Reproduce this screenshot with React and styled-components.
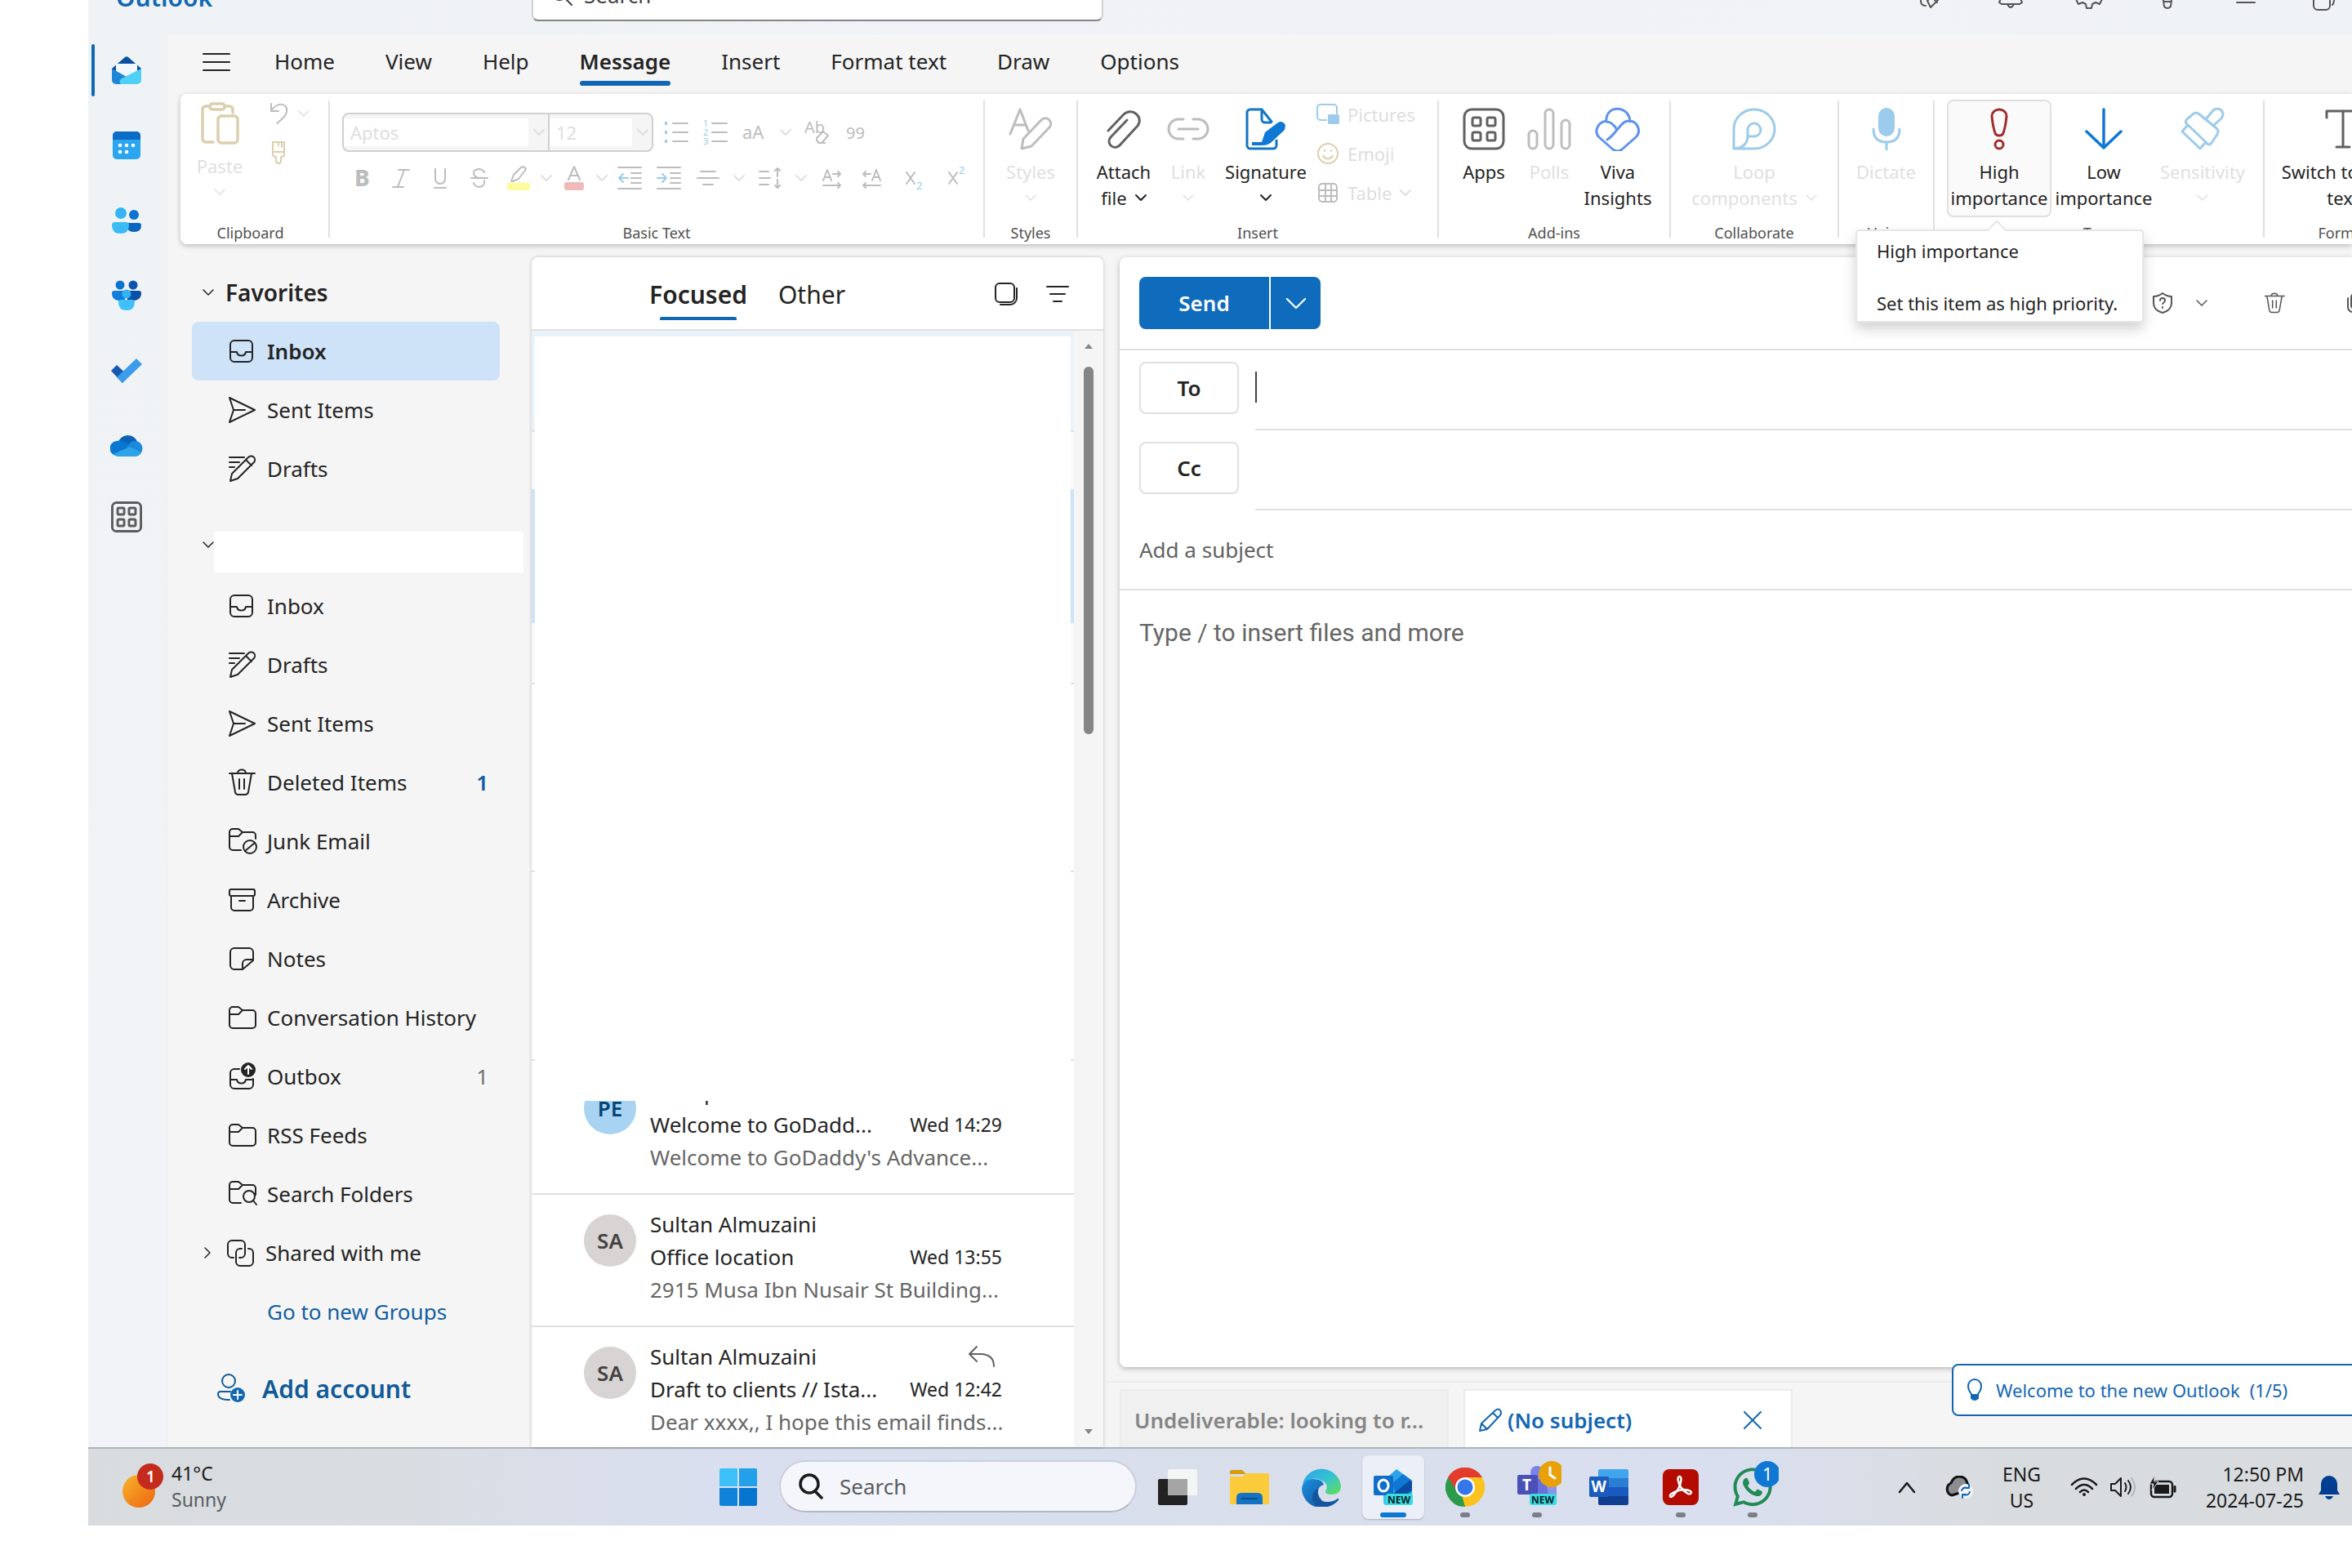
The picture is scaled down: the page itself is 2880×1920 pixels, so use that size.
import React from "react";
import styled, { createGlobalStyle } from "styled-components";
import { FaWhatsapp } from "react-icons/fa";

const GlobalStyle = createGlobalStyle`
  *, *::before, *::after { box-sizing: border-box; }
  body { margin: 0; background: #fff; overflow: hidden; }
  body, button, input, select, textarea { font-family: "Noto Sans", "Open Sans", sans-serif; }
  button { border: 0; padding: 0; background: none; color: inherit; font-size: inherit; }
  svg { display: block; flex: none; }
`;

/* ---------- icon helpers ---------- */

const Svg = ({ w, h, box, children, ...rest }) => (
  <svg width={w} height={h} viewBox={box || `0 0 ${w} ${h}`} fill="none" stroke="currentColor"
    strokeWidth="2" strokeLinecap="round" strokeLinejoin="round" aria-hidden="true" {...rest}>
    {children}
  </svg>
);

const Chevron = ({ w = 14, h = 10, ...rest }) => (
  <Svg w={w} h={h} box="0 0 14 10" {...rest}><path d="M1 2l6 6 6-6" /></Svg>
);

const Letter = ({ x, y, size, children, ...rest }) => (
  <text x={x} y={y} fontSize={size} fontFamily="Noto Sans, sans-serif" fill="currentColor" stroke="none" {...rest}>{children}</text>
);

/* ---------- page frame ---------- */

const Page = styled.div`
  height: 100vh;
  padding: 0 0 52px 108px;
`;

const Screen = styled.div`
  position: relative;
  display: flex;
  flex-direction: column;
  height: 100%;
  overflow: hidden;
  background: #f1f3f7;
  color: #242424;
`;

const TitleBar = styled.header`
  display: flex;
  flex: none;
  align-items: flex-end;
  height: 43px;
  overflow: hidden;
  background: linear-gradient(90deg, #f0f3f5, #f0f2f8 60%, #f0f3f5);
`;

const Brand = styled.span`
  width: 543px;
  padding-left: 34px;
  font-size: 30px;
  font-weight: 600;
  line-height: 40px;
  color: #1267b4;
  margin-bottom: 26px;
`;

const TitleSearch = styled.label`
  display: flex;
  flex: none;
  align-items: center;
  gap: 14px;
  width: 700px;
  height: 64px;
  margin-bottom: 17px;
  padding-left: 22px;
  background: #fff;
  border: 2px solid #d1d1d1;
  border-bottom-color: #858585;
  border-radius: 8px;
  color: #424242;
`;

const PlainInput = styled.input`
  flex: 1;
  min-width: 0;
  border: 0;
  outline: 0;
  padding: 0;
  background: transparent;
  font-size: 26px;
  color: #242424;
  &::placeholder { color: ${(p) => p.$hint || "#616161"}; opacity: 1; }
`;

const TitleActions = styled.div`
  display: flex;
  margin-left: auto;
  margin-right: -14px;
`;

const TitleButton = styled.button`
  display: flex;
  flex: none;
  align-items: center;
  justify-content: center;
  width: 96px;
  height: 96px;
  color: #555;
`;

const Shell = styled.div`
  display: flex;
  flex: 1;
  min-height: 0;
`;

/* ---------- app rail ---------- */

const Rail = styled.nav`
  display: flex;
  flex: none;
  flex-direction: column;
  align-items: center;
  width: 96px;
  margin-top: -3px;
  background: linear-gradient(#f0f3f5, #f1f3f8);
`;

const RailButton = styled.button`
  display: flex;
  flex: none;
  align-items: center;
  justify-content: center;
  width: 100%;
  height: ${(p) => (p.$compact ? 82 : 92)}px;
  padding-right: 2px;
  color: #5c5c5c;
  &::before {
    content: "";
    width: 4px;
    height: 64px;
    margin-right: 20px;
    margin-left: -24px;
    border-radius: 2px;
    background: ${(p) => (p.$active ? "#1267b4" : "transparent")};
  }
`;

const Main = styled.main`
  display: flex;
  flex: 1;
  flex-direction: column;
  min-width: 0;
  background: #f5f5f5;
  border-left: 1px solid #eeeff1;
`;

/* ---------- ribbon ---------- */

const MenuRow = styled.nav`
  display: flex;
  flex: none;
  align-items: flex-start;
  height: 72px;
  padding: 8px 0 0 42px;
`;

const MenuToggle = styled.button`
  display: flex;
  align-items: center;
  justify-content: center;
  width: 36px;
  height: 50px;
  margin-right: 22px;
`;

const MenuTab = styled.button`
  display: flex;
  flex-direction: column;
  flex: none;
  align-items: center;
  padding: 6px 31px 0;
  font-size: 26px;
  line-height: 36px;
  font-weight: ${(p) => (p.$active ? 600 : 400)};
  &::after {
    content: "";
    width: 100%;
    height: 6px;
    margin-top: 6px;
    border-radius: 3px;
    background: ${(p) => (p.$active ? "#1267b4" : "transparent")};
  }
`;

const Ribbon = styled.section`
  position: relative;
  z-index: 2;
  display: flex;
  flex: none;
  height: 184px;
  margin-left: 16px;
  background: #fff;
  border-radius: 8px 0 0 8px;
  box-shadow: 0 2px 6px rgba(0, 0, 0, 0.24);
`;

const Group = styled.div`
  display: flex;
  flex: none;
  flex-direction: column;
  width: ${(p) => p.$w}px;
`;

const GroupBody = styled.div`
  display: flex;
  flex: 1;
  align-items: flex-start;
  justify-content: ${(p) => (p.$center ? "center" : "flex-start")};
  padding: ${(p) => (p.$flush ? 0 : 7)}px 0 0 ${(p) => p.$left || 0}px;
`;

const GroupLabel = styled.div`
  padding: 0 ${(p) => p.$end || 0}px 2px 0;
  font-size: 18px;
  line-height: 24px;
  text-align: center;
  color: #505050;
`;

const Divider = styled.div`
  flex: none;
  width: 2px;
  margin: 8px 0;
  background: #e0e0e0;
`;

const BigButton = styled.button`
  position: relative;
  display: flex;
  flex: none;
  flex-direction: column;
  align-items: center;
  gap: 10px;
  width: ${(p) => p.$w}px;
  height: 144px;
  padding-top: 10px;
  border-radius: 8px;
  font-size: 22px;
  line-height: 32px;
  color: ${(p) => (p.$off ? "#e0e0e0" : "#242424")};
  background: ${(p) => (p.$hover ? "#fafafa" : "transparent")};
  box-shadow: ${(p) => (p.$hover ? "inset 0 0 0 2px #e0e0e0" : "none")};
`;

const BigIcon = styled.span`
  display: flex;
  align-items: center;
  justify-content: center;
  height: 52px;
  color: ${(p) => p.$c || "#616161"};
`;

const BigLabel = styled.span`
  display: flex;
  flex-direction: column;
  align-items: center;
  white-space: nowrap;
`;

const LabelLine = styled.span`
  display: flex;
  align-items: center;
  gap: 10px;
  min-height: 32px;
`;

const SideStack = styled.div`
  display: flex;
  flex-direction: column;
  margin-top: ${(p) => (p.$raised ? -6 : 0)}px;
  padding-left: ${(p) => p.$left}px;
`;

const SideButton = styled.button`
  display: flex;
  align-items: center;
  height: 48px;
  gap: 10px;
  font-size: 22px;
  line-height: 32px;
  color: #dedede;
`;

const SideIcon = styled.span`
  display: flex;
  justify-content: center;
  width: 28px;
  color: ${(p) => p.$c};
`;

const TextTools = styled.div`
  display: flex;
  flex: 1;
  flex-direction: column;
  gap: 8px;
  padding: 23px 0 0 15px;
`;

const ToolRow = styled.div`
  display: flex;
  align-items: center;
  height: 48px;
`;

const ToolButton = styled.button`
  display: flex;
  flex: none;
  align-items: center;
  justify-content: center;
  width: ${(p) => p.$w || 48}px;
  height: 40px;
  color: #bdbdbd;
`;

const Caret = styled(ToolButton)`
  color: #e0e0e0;
`;

const FontBox = styled.div`
  display: flex;
  height: 48px;
  margin-right: 4px;
  border: 2px solid #d1d1d1;
  border-radius: 8px;
  background: #f5f5f5;
  overflow: hidden;
`;

const FontField = styled.label`
  display: flex;
  align-items: center;
  width: ${(p) => p.$w}px;
  padding-right: 4px;
  color: #dedede;
  & + & { border-left: 2px solid #d1d1d1; }
`;

const FontSelect = styled.select`
  flex: 1;
  min-width: 0;
  height: 34px;
  margin-right: 6px;
  padding: 0 0 0 8px;
  border: 0;
  appearance: none;
  background: #fff;
  font-size: 22px;
  line-height: 34px;
  color: #dedede;
  opacity: 1;
`;

const Tooltip = styled.span`
  position: absolute;
  z-index: 5;
  top: 159px;
  left: -112px;
  width: 353px;
  padding: 8px 24px 6px;
  background: #fff;
  border: 2px solid #e6e6e6;
  border-radius: 4px;
  box-shadow: 0 8px 16px rgba(0, 0, 0, 0.18);
  font-size: 22px;
  line-height: 32px;
  text-align: left;
  white-space: nowrap;
  color: #242424;
  &::before {
    content: "";
    position: absolute;
    top: -10px;
    left: 162px;
    width: 18px;
    height: 18px;
    transform: rotate(45deg);
    background: #fff;
    border: solid #e6e6e6;
    border-width: 2px 0 0 2px;
  }
`;

const TipText = styled.span`
  display: block;
  & + & { margin-top: 32px; }
`;

/* ---------- folder pane ---------- */

const Workspace = styled.div`
  position: relative;
  display: flex;
  flex: 1;
  min-height: 0;
`;

const FolderPane = styled.aside`
  flex: none;
  width: 446px;
  padding: 23px 39px 0 30px;
  overflow: hidden;
`;

const SectionHead = styled.button`
  display: flex;
  align-items: center;
  gap: 14px;
  width: 100%;
  height: 72px;
  padding-left: 13px;
  font-size: 28px;
  font-weight: 600;
`;

const AccountHead = styled.div`
  display: flex;
  align-items: center;
  height: 96px;
  padding: 18px 0 0 13px;
  margin-right: -29px;
`;

const Redaction = styled.div`
  flex: 1;
  height: 50px;
  margin-top: 18px;
  background: #fff;
`;

const FolderRow = styled.button`
  display: flex;
  align-items: center;
  width: 100%;
  height: 72px;
  padding: 0 14px 0 ${(p) => (p.$nested ? 14 : 44)}px;
  border-radius: 8px;
  font-size: 26px;
  font-weight: ${(p) => (p.$active ? 600 : 400)};
  background: ${(p) => (p.$active ? "#cfe3f8" : "transparent")};
`;

const FolderIcon = styled.span`
  display: flex;
  width: 36px;
  margin-right: 12px;
`;

const NestedCaret = styled.span`
  display: flex;
  width: 28px;
`;

const Count = styled.span`
  margin-left: auto;
  font-weight: ${(p) => (p.$strong ? 600 : 400)};
  color: ${(p) => (p.$strong ? "#115ea3" : "#707070")};
`;

const GroupsLink = styled.a`
  display: flex;
  align-items: center;
  height: 72px;
  padding-left: 92px;
  font-size: 26px;
  color: #115ea3;
  text-decoration: none;
`;

const AddAccount = styled.button`
  display: flex;
  align-items: center;
  gap: 20px;
  height: 80px;
  margin-top: 18px;
  padding-left: 30px;
  font-size: 30px;
  font-weight: 600;
  color: #115a97;
`;

/* ---------- message list ---------- */

const ListPane = styled.section`
  display: flex;
  flex: none;
  flex-direction: column;
  width: 700px;
  margin-top: 16px;
  background: #fff;
  border-radius: 8px 8px 0 0;
  box-shadow: 0 0 4px rgba(0, 0, 0, 0.22);
  overflow: hidden;
`;

const ListHead = styled.div`
  display: flex;
  flex: none;
  align-items: flex-start;
  height: 90px;
  padding: 26px 42px 0 144px;
  border-bottom: 2px solid #e0e0e0;
`;

const PivotTab = styled.button`
  display: flex;
  flex-direction: column;
  align-items: center;
  margin-right: 32px;
  font-size: 30px;
  line-height: 40px;
  font-weight: ${(p) => (p.$active ? 600 : 400)};
  &::after {
    content: "";
    width: 94px;
    height: 4px;
    margin-top: 7px;
    border-radius: 2px 2px 0 0;
    background: ${(p) => (p.$active ? "#1267b4" : "transparent")};
  }
`;

const ListActions = styled.div`
  display: flex;
  gap: 34px;
  margin: 4px 0 0 auto;
`;

const ListBody = styled.div`
  display: flex;
  flex: 1;
  min-height: 0;
`;

const Rows = styled.div`
  flex: 1;
  min-width: 0;
  overflow: hidden;
`;

const HiddenRow = styled.div`
  height: ${(p) => p.$h}px;
  padding: ${(p) => p.$top || 0}px 4px 0;
  background: ${(p) => p.$bg || "#fff"};
  &::before { content: ""; display: block; height: 100%; background: #fff; }
`;

const MessageRow = styled.article`
  position: relative;
  display: flex;
  gap: 17px;
  height: 162px;
  padding: 24px 88px 0 64px;
  border-top: 2px solid ${(p) => (p.$covered ? "transparent" : "#e0e0e0")};
`;

const RowCover = styled.div`
  position: absolute;
  top: 0;
  left: 0;
  right: 0;
  height: 47px;
  background: #fff;
`;

const Avatar = styled.span`
  display: flex;
  flex: none;
  align-items: center;
  justify-content: center;
  width: 64px;
  height: 64px;
  border-radius: 50%;
  font-size: 26px;
  font-weight: 600;
  background: ${(p) => (p.$blue ? "#a9d3f2" : "#d7d4d3")};
  color: ${(p) => (p.$blue ? "#004377" : "#444241")};
`;

const MessageText = styled.div`
  flex: 1;
  min-width: 0;
  margin-top: -8px;
  font-size: 26px;
  line-height: 40px;
  white-space: nowrap;
`;

const MessageLine = styled.div`
  display: flex;
  align-items: center;
  justify-content: space-between;
  height: 40px;
  color: ${(p) => (p.$dim ? "#666" : "#242424")};
  padding-left: ${(p) => p.$indent || 0}px;
`;

const Time = styled.time`
  font-size: 23px;
`;

const ReplyMark = styled.span`
  padding-right: 8px;
  color: #616161;
`;

const ScrollTrack = styled.div`
  display: flex;
  flex: none;
  flex-direction: column;
  align-items: center;
  width: 36px;
  padding: 16px 0;
  background: #f5f5f5;
  color: #858585;
`;

const ScrollThumb = styled.div`
  width: 12px;
  height: 450px;
  margin: 22px 0 auto;
  border-radius: 6px;
  background: #858585;
`;

/* ---------- compose ---------- */

const ComposeColumn = styled.section`
  display: flex;
  flex: 1;
  flex-direction: column;
  min-width: 0;
  padding-top: 16px;
`;

const ComposeCard = styled.div`
  display: flex;
  flex: 1;
  flex-direction: column;
  min-height: 0;
  margin-left: 20px;
  background: #fff;
  border-radius: 8px 0 0 8px;
  box-shadow: 0 2px 6px rgba(0, 0, 0, 0.26);
`;

const ComposeBar = styled.div`
  display: flex;
  flex: none;
  align-items: center;
  height: 114px;
  padding-left: 24px;
  border-bottom: 2px solid #e0e0e0;
  overflow: hidden;
`;

const SendGroup = styled.div`
  display: flex;
  gap: 2px;
  height: 64px;
  border-radius: 8px;
  overflow: hidden;
`;

const SendButton = styled.button`
  display: flex;
  align-items: center;
  justify-content: center;
  width: ${(p) => p.$w}px;
  background: #0f6cbd;
  color: #fff;
  font-size: 26px;
  font-weight: 600;
`;

const BarActions = styled.div`
  display: flex;
  align-items: center;
  margin-left: auto;
  margin-right: -19px;
  color: #555;
`;

const BarButton = styled.button`
  display: flex;
  flex: none;
  justify-content: center;
  margin-left: ${(p) => p.$gap || 0}px;
`;

const Recipient = styled.div`
  display: flex;
  flex: none;
  gap: 20px;
  height: 98px;
  padding-left: 24px;
`;

const RecipientButton = styled.button`
  width: 122px;
  height: 64px;
  margin-top: 14px;
  border: 2px solid #e0e0e0;
  border-radius: 8px;
  font-size: 26px;
  font-weight: 600;
`;

const RecipientField = styled.div`
  display: flex;
  flex: 1;
  min-width: 0;
  padding: 26px 0 32px;
  border-bottom: 2px solid #e0e0e0;
`;

const TextCursor = styled.span`
  width: 2px;
  background: #424242;
`;

const SubjectRow = styled.div`
  display: flex;
  flex: none;
  height: 98px;
  padding-left: 24px;
  border-bottom: 2px solid #e0e0e0;
`;

const Body = styled.textarea`
  flex: 1;
  width: 100%;
  min-height: 0;
  padding: 32px 24px 0;
  border: 0;
  border-radius: 8px;
  outline: 0;
  resize: none;
  background: transparent;
  font-family: Roboto, "Liberation Sans", sans-serif;
  font-size: 30px;
  line-height: 40px;
  &::placeholder { color: #666; opacity: 1; }
`;

const DraftTabs = styled.div`
  display: flex;
  flex: none;
  gap: 18px;
  height: 81px;
  margin: 17px 0 0 4px;
  padding: 8px 0 0 16px;
  border-top: 2px solid #ebebeb;
`;

const DraftTab = styled.div`
  display: flex;
  align-items: center;
  width: 403px;
  padding: 2px 16px 0;
  border: 2px solid #ebebeb;
  border-bottom: 0;
  background: ${(p) => (p.$active ? "#fff" : "#f0f0f0")};
  color: ${(p) => (p.$active ? "#1267b4" : "#858585")};
  font-size: 26px;
  font-weight: 600;
  white-space: nowrap;
`;

const DraftTitle = styled.button`
  display: flex;
  align-items: center;
  gap: 6px;
  font-weight: inherit;
`;

const DraftClose = styled.button`
  margin: 0 20px 0 auto;
`;

const TipCard = styled.button`
  position: absolute;
  right: -8px;
  bottom: 38px;
  display: flex;
  align-items: center;
  gap: 16px;
  width: 498px;
  height: 64px;
  padding-left: 16px;
  background: #fff;
  border: 2px solid #1267b4;
  border-radius: 8px;
  font-size: 22px;
  color: #1267b4;
  span + span { margin-left: -4px; }
`;

/* ---------- taskbar ---------- */

const Taskbar = styled.footer`
  display: flex;
  flex: none;
  align-items: stretch;
  height: 96px;
  border-top: 2px solid #b0b4ba;
  background: linear-gradient(90deg, #d8dcdf 0, #d9dde2 14%, #dadff0 28%, #d9deeb 50%, #dadff0 72%, #d9dcdf 84%, #d9dcdf);
  color: #1a1a1a;
  font-size: 23px;
  line-height: 32px;
`;

const Weather = styled.button`
  display: flex;
  flex: none;
  align-items: center;
  gap: 8px;
  width: 752px;
  padding: 0 0 2px 42px;
  text-align: left;
  line-height: 32px;
  small { display: block; font-size: 23px; color: #5a5c5e; }
`;

const TaskApp = styled.button`
  position: relative;
  display: flex;
  flex: none;
  align-items: center;
  justify-content: center;
  width: 76px;
  height: 78px;
  margin: 8px 6px;
  border-radius: 8px;
  background: ${(p) => (p.$active ? "#ebeff7" : "transparent")};
  box-shadow: ${(p) => (p.$active ? "0 1px 2px rgba(0,0,0,.22)" : "none")};
  &::after {
    content: "";
    position: absolute;
    bottom: 2px;
    width: ${(p) => (p.$active ? 32 : 12)}px;
    height: 6px;
    border-radius: 3px;
    background: ${(p) => (p.$active ? "#0f78d4" : p.$open ? "#7b7e86" : "transparent")};
  }
`;

const TaskSearch = styled.label`
  display: flex;
  flex: none;
  align-items: center;
  gap: 20px;
  width: 438px;
  height: 64px;
  margin: 14px 6px;
  padding: 0 22px;
  border: 2px solid #cbcfdd;
  border-bottom-color: #b5b8c5;
  border-radius: 32px;
  background: #f4f6fb;
`;

const Tray = styled.div`
  display: flex;
  align-items: center;
  gap: 36px;
  margin-left: auto;
  padding-right: 15px;
`;

const TrayText = styled.div`
  text-align: ${(p) => p.$align || "center"};
  white-space: nowrap;
`;

const TrayIcons = styled.div`
  display: flex;
  align-items: center;
  gap: 14px;
`;

const ClockGroup = styled.div`
  display: flex;
  align-items: center;
  gap: 18px;
`;

/* ---------- drawings ---------- */

const folderPath = "M2 6a4 4 0 014-4h7l5 4h12a4 4 0 014 4v14a4 4 0 01-4 4H6a4 4 0 01-4-4zM2 11h11l5-5";

const icons = {
  inbox: <Svg w={32} h={32}><rect x="3" y="3" width="27" height="26" rx="5" /><path d="M3 17h8c1 6 10 6 11 0h8" /></Svg>,
  sent: <Svg w={34} h={34}><path d="M2 2l31 15L2 32l5-15zM7 17h14" /></Svg>,
  drafts: <Svg w={34} h={34}><path d="M2 3h18M2 9h12M2 15h6M3 32l2-9L25 3a4.500 4.500 0 017 6L12 29zM22 6l7 7" /></Svg>,
  trash: <Svg w={34} h={34}><path d="M2 6h31M5 6l4 23a4 4 0 004 3h8a4 4 0 004-3l4-23M12 6c0-6 10-6 10 0M14 13v12M20 13v12" /></Svg>,
  junk: <Svg w={36} h={34}><path d="M16 28H6a4 4 0 01-4-4V6a4 4 0 014-4h7l5 4h12a4 4 0 014 4v4M2 11h11l5-5" /><circle cx="27" cy="24" r="8" /><path d="M21 29l12-10" /></Svg>,
  archive: <Svg w={34} h={30}><rect x="2" y="2" width="31" height="8" rx="2" /><path d="M4 10v14a4 4 0 004 4h19a4 4 0 004-4V10M14 16h7" /></Svg>,
  notes: <Svg w={34} h={30}><path d="M18 28H8a5 5 0 01-5-5V7a5 5 0 015-5h18a5 5 0 015 5v10zM31 16h-8a5 5 0 00-5 5v7" /></Svg>,
  folder: <Svg w={36} h={30}><path d={folderPath} /></Svg>,
  outbox: <Svg w={34} h={36}><path d="M14 9H8a5 5 0 00-5 5v14a5 5 0 005 5h18a5 5 0 005-5v-7M3 22h8c1 6 10 6 11 0h9" /><circle cx="25" cy="10" r="9" fill="currentColor" stroke="none" /><path d="M25 15V6M21 9l4-4 4 4" stroke="#fff" /></Svg>,
  searchFolder: <Svg w={36} h={34}><path d="M16 28H6a4 4 0 01-4-4V6a4 4 0 014-4h7l5 4h12a4 4 0 014 4v8M2 11h11l5-5" /><circle cx="26" cy="20" r="7" /><path d="M31 25l4 5" /></Svg>,
  shared: <Svg w={34} h={34}><path d="M9 23H7a5 5 0 01-5-5V7a5 5 0 015-5h11a5 5 0 015 5v11a5 5 0 01-5 5h-2" /><path d="M19 12h-2a5 5 0 00-5 5v11a5 5 0 005 5h11a5 5 0 005-5V17a5 5 0 00-5-5h-1" /></Svg>,
  apps: <Svg w={52} h={52} strokeWidth="3"><rect x="2" y="2" width="48" height="48" rx="9" /><rect x="12" y="12" width="10" height="10" rx="2" /><rect x="30" y="12" width="10" height="10" rx="2" /><rect x="12" y="30" width="10" height="10" rx="2" /><rect x="30" y="30" width="10" height="10" rx="2" /></Svg>,
};

const MailLogo = () => (
  <Svg w={38} h={34} stroke="none">
    <path d="M1 15L17 1q2-1.500 4 0l16 14v8H1z" fill="#0a4fa0" />
    <path d="M6 11q0-2 2-2h22q2 0 2 2v12l-13 6-13-6z" fill="#f2f8ff" />
    <path d="M1 15l18 10v9H6a5 5 0 01-5-5z" fill="#1f86d8" />
    <path d="M37 15v14a5 5 0 01-5 5H12q-4-5 3-8z" fill="#4fd0f6" />
  </Svg>
);

const CalendarLogo = () => (
  <Svg w={34} h={34} stroke="none">
    <rect width="34" height="34" rx="5" fill="#2aa5f0" /><path d="M0 10V5a5 5 0 015-5h24a5 5 0 015 5v5z" fill="#0a6cc4" />
    <g fill="#fff"><circle cx="9" cy="17" r="2.300" /><circle cx="17" cy="17" r="2.300" /><circle cx="25" cy="17" r="2.300" /><circle cx="9" cy="25" r="2.300" /><circle cx="17" cy="25" r="2.300" /></g>
  </Svg>
);

const PeopleLogo = () => (
  <Svg w={38} h={32} stroke="none">
    <circle cx="28" cy="9" r="6" fill="#0c74cf" /><path d="M20 19h14q3 0 3 3 0 8-9 8-6 0-8-4z" fill="#0866be" />
    <circle cx="12" cy="7" r="7" fill="#37b4f5" /><path d="M1 22q0-4 4-4h13q4 0 4 4 0 10-10.500 10T1 22z" fill="#3cbaf7" />
  </Svg>
);

const GroupsLogo = () => (
  <Svg w={38} h={38} stroke="none">
    <circle cx="11" cy="6" r="5.500" fill="#0c74cf" /><circle cx="27" cy="6" r="5.500" fill="#0a56ae" />
    <path d="M1 16q0-3 3-3h13v12q-16 2-16-9z" fill="#0f7ddc" /><path d="M37 16q0-3-3-3H20v12q17 2 17-9z" fill="#0a4fa8" />
    <circle cx="19" cy="17" r="5.500" fill="#35b2f3" /><path d="M9 27q0-3 3-3h14q3 0 3 3 0 10-10 10T9 27z" fill="#3fc0fa" />
  </Svg>
);

const TodoLogo = () => (
  <Svg w={40} h={32} stroke="none">
    <path d="M1 16l7-7 14 13-7 9z" fill="#1559b5" /><path d="M15 31l-7-7L32 1l7 7z" fill="#3c9bec" />
  </Svg>
);

const CloudLogo = () => (
  <Svg w={40} h={28} stroke="none">
    <path d="M9 12C12-2 29-2 33 9l-12 8z" fill="#0a63b8" /><path d="M9 26a9 9 0 01-1-18q6-2 12 3l8 5-20 10z" fill="#0a78d2" />
    <path d="M30 8a9 9 0 011 18L20 16q4-8 10-8z" fill="#1b89dc" /><path d="M4 24l20-9 14 7q-2 5-8 5H10q-4 0-6-3z" fill="#2fa3e8" />
  </Svg>
);

const WindowsLogo = () => (
  <Svg w={46} h={46} stroke="none">
    <path d="M0 2q0-2 2-2h20v22H0z" fill="#3cc0f7" /><path d="M24 0h20q2 0 2 2v20H24z" fill="#22a0ea" />
    <path d="M0 24h22v22H2q-2 0-2-2z" fill="#0f83da" /><path d="M24 24h22v20q0 2-2 2H24z" fill="#0675cf" />
  </Svg>
);

const TaskViewLogo = () => (
  <Svg w={48} h={46} stroke="none">
    <rect y="13" width="36" height="32" rx="2" fill="#222" /><rect x="12" y="1" width="36" height="32" rx="2" fill="#f6f6f6" opacity=".95" /><rect x="12" y="13" width="24" height="20" fill="#a5a5a5" />
  </Svg>
);

const FilesLogo = () => (
  <Svg w={48} h={44} stroke="none">
    <path d="M0 3q0-2 2-2h13l5 5H0z" fill="#d99c0b" /><path d="M0 9h16l4-4h26q2 0 2 2v36H0z" fill="#fccb3b" />
    <path d="M8 43V35q0-6 6-6h20q6 0 6 6v8z" fill="#1372c4" /><path d="M15 36h18" stroke="#0b4c8c" strokeWidth="2" />
  </Svg>
);

const EdgeLogo = () => (
  <Svg w={48} h={48} stroke="none">
    <defs>
      <linearGradient id="edgeTop" x1="0" y1="0" x2="1" y2="1"><stop offset="0" stopColor="#2f9fe8" /><stop offset=".5" stopColor="#33c3d3" /><stop offset="1" stopColor="#66e04f" /></linearGradient>
      <linearGradient id="edgeLow" x1="0" y1="0" x2="1" y2="1"><stop offset="0" stopColor="#1b92e2" /><stop offset="1" stopColor="#134a97" /></linearGradient>
    </defs>
    <path d="M1 20A24 24 0 0148 22q0 11-11 11-9 0-8-4 4-6-1-11Q14 8 1 20z" fill="url(#edgeTop)" />
    <path d="M0 25Q2 14 14 14q11 0 13 7-8 2-7 11 2 9 14 15A24 24 0 010 25z" fill="url(#edgeLow)" />
    <path d="M20 26q-3 16 12 16 7 0 12-4 2 0 1 2-8 9-20 8-13-3-12-13 1-7 7-9z" fill="#15559f" />
  </Svg>
);

const OutlookLogo = () => (
  <Svg w={48} h={44} stroke="none">
    <path d="M12 14L28 0l19 14v26q0 4-4 4H18z" fill="#2da4ea" /><path d="M22 18L36 6l11 8v6L30 36z" fill="#0f78d4" /><path d="M24 30l20-16 3 2v10L32 38z" fill="#0a4ea4" /><path d="M12 24l16 12-6 8h-6q-4 0-4-4z" fill="#46c0f3" />
    <rect y="8" width="24" height="24" rx="2" fill="#0f6fc8" /><ellipse cx="12" cy="20" rx="6" ry="7" stroke="#fff" strokeWidth="3" />
    <rect x="15" y="30" width="33" height="14" rx="3" fill="#36dfe0" /><Letter x="17" y="41.500" size="12" fontWeight="700" color="#10202c">NEW</Letter>
  </Svg>
);

const ChromeLogo = () => (
  <Svg w={48} h={48} stroke="none">
    <path d="M24 24L3.200 12a24 24 0 0141.600 0z" fill="#e33b2e" /><path d="M24 24l20.800-12A24 24 0 0124 48z" fill="#fcc31e" /><path d="M24 24v24A24 24 0 013.200 12z" fill="#2b9a4a" />
    <path d="M24 12h20.800q2 4 3 8L24 24zM34 30L24 48l-4-14z" fill="#fcc31e" /><path d="M24 12h20.800A24 24 0 003.200 12l11 17z" fill="#e33b2e" />
    <circle cx="24" cy="24" r="12" fill="#fff" /><circle cx="24" cy="24" r="9.500" fill="#3577ea" />
  </Svg>
);

const TeamsLogo = () => (
  <Svg w={60} h={64} stroke="none">
    <circle cx="30" cy="14" r="8" fill="#7b83eb" /><path d="M22 22h30q2 0 2 2v16q0 14-14 14-18 0-18-18z" fill="#6870dc" /><path d="M40 22h12q2 0 2 2v14q0 9-8 12z" fill="#8b92ee" />
    <rect x="6" y="17" width="25" height="24" rx="2" fill="#4b50b8" /><Letter x="12" y="36" size="19" fontWeight="700" color="#fff">T</Letter>
    <rect x="21" y="40" width="33" height="14" rx="3" fill="#36dfe0" /><Letter x="23" y="51.500" size="12" fontWeight="700" color="#10202c">NEW</Letter>
    <circle cx="48" cy="16" r="16" fill="#e9a109" /><path d="M46 8v9l6 4" stroke="#fff" strokeWidth="3" />
  </Svg>
);

const WordLogo = () => (
  <Svg w={48} h={44} stroke="none">
    <path d="M11 11V2q0-2 2-2h33q2 0 2 2v9z" fill="#41a5ee" /><path d="M11 11h37v11H11z" fill="#2b7cd3" /><path d="M11 22h37v11H11z" fill="#185abd" /><path d="M11 33h37v9q0 2-2 2H13q-2 0-2-2z" fill="#103f91" />
    <rect y="9" width="24" height="25" rx="2" fill="#1b5cbe" /><Letter x="2.500" y="28" size="19" fontWeight="700" color="#fff">W</Letter>
  </Svg>
);

const AcrobatLogo = () => (
  <Svg w={44} h={44}>
    <rect width="44" height="44" rx="8" fill="#b30b00" stroke="none" />
    <path d="M20 9c4-1 3 8-1 15s-9 12-10 9 10-8 17-8 11 3 8 5-12-6-14-12-2-8 0-9z" stroke="#fff" strokeWidth="2.500" />
  </Svg>
);

const WhatsAppLogo = () => (
  <Svg w={64} h={64} stroke="none">
    <g color="#1f8a54"><FaWhatsapp x="5" y="5" size={54} /></g>
    <circle cx="50" cy="16" r="16" fill="#0f78d4" /><Letter x="44" y="24" size="22" color="#fff">1</Letter>
  </Svg>
);

const SunLogo = () => (
  <Svg w={52} h={56} stroke="none">
    <defs><linearGradient id="sun" x1="0" y1="0" x2="1" y2="1"><stop offset="0" stopColor="#f7b52c" /><stop offset="1" stopColor="#ee6310" /></linearGradient></defs>
    <circle cx="20" cy="34" r="20" fill="url(#sun)" /><circle cx="34" cy="16" r="16" fill="#c42b1c" /><Letter x="29" y="23" size="19" fontWeight="600" color="#fff">1</Letter>
  </Svg>
);

/* ---------- sections ---------- */

const Lines = ({ first, second, caret, off }) => (
  <BigLabel>
    <LabelLine>{first}</LabelLine>
    <LabelLine>{second}{caret && <Chevron strokeWidth={off ? 1.5 : 2} />}</LabelLine>
  </BigLabel>
);

const ribbonTabs = ["Home", "View", "Help", "Message", "Insert", "Format text", "Draw", "Options"];
const noFill = "#bdbdbd";
const paleBlue = "#9ccbeb";
const gold = "#dccfae";

const RibbonBar = () => (
  <Ribbon aria-label="Message ribbon">
    <Group $w={181}>
      <GroupBody $flush $left={13}>
        <BigButton $w={70} $off>
          <BigIcon $c={gold}><Svg w={48} h={52} strokeWidth="3.500"><path d="M12 5H7a4 4 0 00-4 4v36a4 4 0 004 4h9M30 5h6a4 4 0 014 4v4" /><rect x="12" y="2" width="18" height="7" rx="3" /><rect x="22" y="17" width="24" height="33" rx="4" /></Svg></BigIcon>
          <Lines first="Paste" caret off />
        </BigButton>
        <SideStack $left={23}>
          <SideButton aria-label="Undo">
            <SideIcon $c={noFill}><Svg w={24} h={28}><path d="M3 2v9h9M3 11C9 0 24 0 22 12q-1 6-12 14" /></Svg></SideIcon>
            <Chevron strokeWidth="1.500" />
          </SideButton>
          <SideButton aria-label="Format painter"><SideIcon $c={gold}><Svg w={18} h={28}><path d="M2 1h14v12H2zM2 13v3q0 3 4 3v5a3 3 0 006 0v-5q4 0 4-3v-3M9 1v4M13 1v6" /></Svg></SideIcon></SideButton>
        </SideStack>
      </GroupBody>
      <GroupLabel $end={10}>Clipboard</GroupLabel>
    </Group>
    <Divider />
    <Group $w={800}>
      <TextTools>
        <ToolRow>
          <FontBox>
            <FontField $w={250}>
              <FontSelect aria-label="Font" disabled><option>Aptos</option></FontSelect><Chevron />
            </FontField>
            <FontField $w={127}>
              <FontSelect aria-label="Font size" disabled><option>12</option></FontSelect><Chevron />
            </FontField>
          </FontBox>
          <ToolButton aria-label="Bullets"><Svg w={32} h={28}><path d="M12 3h18M12 14h18M12 25h18" /><path d="M2 3h3M2 14h3M2 25h3" stroke={paleBlue} strokeWidth="4" strokeLinecap="butt" /></Svg></ToolButton>
          <ToolButton aria-label="Numbering"><Svg w={32} h={32}><path d="M12 5h18M12 16h18M12 27h18" /><g color={paleBlue}><Letter x="1" y="9" size="11">1</Letter><Letter x="1" y="20" size="11">2</Letter><Letter x="1" y="31" size="11">3</Letter></g></Svg></ToolButton>
          <ToolButton aria-label="Change case"><Svg w={32} h={28}><Letter x="1" y="22" size="22">aA</Letter></Svg></ToolButton>
          <Caret $w={28} aria-label="Case options"><Chevron /></Caret>
          <ToolButton aria-label="Clear formatting"><Svg w={32} h={30}><Letter x="1" y="16" size="20">Ab</Letter><path d="M16 22l8-8 6 5-8 9h-3l-3-3zM18 28h8" fill="#fff" /></Svg></ToolButton>
          <ToolButton aria-label="Quote"><Svg w={26} h={28}><Letter x="1" y="22" size="20">99</Letter></Svg></ToolButton>
        </ToolRow>
        <ToolRow>
          <ToolButton aria-label="Bold"><Svg w={24} h={28}><Letter x="3" y="24" size="28" fontWeight="800">B</Letter></Svg></ToolButton>
          <ToolButton aria-label="Italic"><Svg w={24} h={28}><path d="M9 4h13M2 25h13M16 4L8 25" /></Svg></ToolButton>
          <ToolButton aria-label="Underline"><Svg w={20} h={28}><path d="M4 3v12a6 6 0 0012 0V3M3 26h14" /></Svg></ToolButton>
          <ToolButton aria-label="Strikethrough"><Svg w={24} h={28}><path d="M18 7Q16 3 11 3 4 4 5 9q1 4 7 5h10M2 14h20M5 20q2 5 7 5 7-1 6-8" /></Svg></ToolButton>
          <ToolButton aria-label="Highlight"><Svg w={30} h={32}><path d="M1 22h28v6q0 3-3 3H4q-3 0-3-3z" fill="#fbfb9c" stroke="none" /><path d="M6 20l3-8L18 3q4-2 6 2l-9 12-7 3z" fill="#fff" /></Svg></ToolButton>
          <Caret $w={20} aria-label="Highlight colours"><Chevron /></Caret>
          <ToolButton aria-label="Font colour"><Svg w={26} h={32}><path d="M6 18l7-16 7 16M9 13h8" /><rect x="1" y="21" width="24" height="10" rx="3" fill="#eebbb8" stroke="none" /></Svg></ToolButton>
          <Caret $w={20} aria-label="Font colours"><Chevron /></Caret>
          <ToolButton aria-label="Decrease indent"><Svg w={30} h={30}><path d="M1 2h28M17 9h12M17 15h12M17 21h12M1 28h28" /><path d="M13 15H2M7 10l-5 5 5 5" stroke={paleBlue} /></Svg></ToolButton>
          <ToolButton aria-label="Increase indent"><Svg w={30} h={30}><path d="M1 2h28M17 9h12M17 15h12M17 21h12M1 28h28" /><path d="M1 15h11M7 10l5 5-5 5" stroke={paleBlue} /></Svg></ToolButton>
          <ToolButton aria-label="Align"><Svg w={28} h={20}><path d="M5 2h18M1 10h26M8 18h12" /></Svg></ToolButton>
          <Caret $w={28} aria-label="Alignments"><Chevron /></Caret>
          <ToolButton aria-label="Line spacing"><Svg w={30} h={28}><path d="M2 6h11M2 14h13M2 22h11M24 12V2M21 5l3-3 3 3M24 16v10M21 23l3 3 3-3" /></Svg></ToolButton>
          <Caret $w={28} aria-label="Spacings"><Chevron /></Caret>
          <ToolButton aria-label="Left to right"><Svg w={26} h={26}><path d="M2 16L7 3l5 13M4 12h6M14 8h9M20 5l3 3-3 3M2 22h21M20 19l3 3-3 3" /></Svg></ToolButton>
          <ToolButton aria-label="Right to left"><Svg w={26} h={26}><path d="M14 16l5-13 5 13M16 12h6M12 8H3M6 5L3 8l3 3M24 22H3M6 19l-3 3 3 3" /></Svg></ToolButton>
          <ToolButton $w={56} aria-label="Subscript"><Svg w={26} h={30}><path d="M4 8l10 14M14 8L4 22" /><g color={paleBlue}><Letter x="16" y="29" size="13">2</Letter></g></Svg></ToolButton>
          <ToolButton aria-label="Superscript"><Svg w={26} h={30}><path d="M4 8l10 14M14 8L4 22" /><g color={paleBlue}><Letter x="16" y="10" size="13">2</Letter></g></Svg></ToolButton>
        </ToolRow>
      </TextTools>
      <GroupLabel>Basic Text</GroupLabel>
    </Group>
    <Divider />
    <Group $w={112}>
      <GroupBody $center>
        <BigButton $w={96} $off>
          <BigIcon $c={noFill}><Svg w={54} h={52} strokeWidth="3"><path d="M2 32L14 2l10 26M7 21h13M16 50l2-12L40 15a6 6 0 0110 9L28 47z" /></Svg></BigIcon>
          <Lines first="Styles" caret off />
        </BigButton>
      </GroupBody>
      <GroupLabel>Styles</GroupLabel>
    </Group>
    <Divider />
    <Group $w={440}>
      <GroupBody $left={14}>
        <BigButton $w={84}>
          <BigIcon><Svg w={44} h={48} strokeWidth="3"><path d="M3 26L22 6c10-9 25 3 17 14L17 44C9 51 0 41 6 34l20-21" /></Svg></BigIcon>
          <Lines first="Attach" second="file" caret />
        </BigButton>
        <BigButton $w={74} $off>
          <BigIcon $c={noFill}><Svg w={52} h={28} strokeWidth="3"><path d="M20 2h-6a12 12 0 000 24h6M32 2h6a12 12 0 010 24h-6M14 14h24" /></Svg></BigIcon>
          <Lines first="Link" caret off />
        </BigButton>
        <BigButton $w={116}>
          <BigIcon $c="#1277c6"><Svg w={50} h={52} strokeWidth="3"><path d="M31 18h-7a4 4 0 01-4-4V2H6a4 4 0 00-4 4v40a4 4 0 004 4h28a4 4 0 004-4V40M20 2l12 15" /><path d="M8 42h12l4-12L40 18q5-3 9 3l-1 6-15 14q-4 5-13 5H8z" fill="#0f78d4" stroke="none" /></Svg></BigIcon>
          <Lines first="Signature" caret />
        </BigButton>
        <SideStack $left={4} $raised>
          <SideButton><SideIcon $c={paleBlue}><Svg w={28} h={26}><path d="M12 20H5a4 4 0 01-4-4V5a4 4 0 014-4h16a4 4 0 014 4v7" /><rect x="14" y="13" width="14" height="12" rx="2" fill="currentColor" stroke="none" /></Svg></SideIcon>Pictures</SideButton>
          <SideButton><SideIcon $c={gold}><Svg w={28} h={28}><circle cx="14" cy="14" r="12" /><path d="M8 17q6 7 12 0M10 10v1M18 10v1" /></Svg></SideIcon>Emoji</SideButton>
          <SideButton><SideIcon $c={noFill}><Svg w={24} h={24}><rect x="1" y="1" width="22" height="22" rx="4" /><path d="M1 9h22M1 16h22M9 1v22M16 1v22" /></Svg></SideIcon>Table<Chevron /></SideButton>
        </SideStack>
      </GroupBody>
      <GroupLabel>Insert</GroupLabel>
    </Group>
    <Divider />
    <Group $w={282}>
      <GroupBody $left={15}>
        <BigButton $w={80}><BigIcon>{icons.apps}</BigIcon><Lines first="Apps" /></BigButton>
        <BigButton $w={80} $off>
          <BigIcon $c={noFill}><Svg w={54} h={52} strokeWidth="3"><rect x="2" y="28" width="10" height="22" rx="5" /><rect x="22" y="2" width="10" height="48" rx="5" /><rect x="42" y="15" width="10" height="35" rx="5" /></Svg></BigIcon>
          <Lines first="Polls" />
        </BigButton>
        <BigButton $w={88}>
          <BigIcon $c="#5d93ee"><Svg w={56} h={54} strokeWidth="3"><path d="M14 18c-2-21 28-21 29 0M14 17C2 19-1 31 5 37l17 15q6 4 11 0l17-15c8-8 1-20-8-20-6 0-8 3-15 11q-7 9-12 12M14 18c5 0 9 3 13 10" /></Svg></BigIcon>
          <Lines first="Viva" second="Insights" />
        </BigButton>
      </GroupBody>
      <GroupLabel>Add-ins</GroupLabel>
    </Group>
    <Divider />
    <Group $w={204}>
      <GroupBody $center>
        <BigButton $w={180} $off>
          <BigIcon $c={paleBlue}><Svg w={54} h={52} strokeWidth="3"><path d="M2 50V26a25 24 0 1125 24zM2 50q17-1 17-16v-8a8 8 0 118 9h-7" /></Svg></BigIcon>
          <Lines first="Loop" second="components" caret off />
        </BigButton>
      </GroupBody>
      <GroupLabel>Collaborate</GroupLabel>
    </Group>
    <Divider />
    <Group $w={115}>
      <GroupBody $center>
        <BigButton $w={96} $off>
          <BigIcon $c={paleBlue}><Svg w={36} h={52} strokeWidth="3"><rect x="8" y="0" width="20" height="35" rx="10" fill="currentColor" stroke="none" /><path d="M2 26q0 16 16 16t16-16M18 42v9" /></Svg></BigIcon>
          <Lines first="Dictate" />
        </BigButton>
      </GroupBody>
      <GroupLabel>Voice</GroupLabel>
    </Group>
    <Divider />
    <Group $w={402}>
      <GroupBody $left={15}>
        <BigButton $w={128} $hover aria-describedby="importance-tip">
          <BigIcon $c="#a02c2c"><Svg w={24} h={52} strokeWidth="3"><path d="M3 10a9 8 0 0118 0q-1 12-4 21-1 3-5 3t-5-3Q4 22 3 10z" /><circle cx="12" cy="45" r="5" /></Svg></BigIcon>
          <Lines first="High" second="importance" />
          <Tooltip id="importance-tip" role="tooltip">
            <TipText>High importance</TipText>
            <TipText>Set this item as high priority.</TipText>
          </Tooltip>
        </BigButton>
        <BigButton $w={128}>
          <BigIcon $c="#0f78d4"><Svg w={46} h={52} strokeWidth="3.500"><path d="M23 2v47M2 29l21 20 21-20" /></Svg></BigIcon>
          <Lines first="Low" second="importance" />
        </BigButton>
        <BigButton $w={114} $off>
          <BigIcon $c={paleBlue}><Svg w={54} h={52} strokeWidth="3"><path d="M15 8q3-3 7-1l22 18q4 4 0 9l-6 9q-3 4-6 0L7 19q-2-3 2-6zM9 21l-7 8 22 21 7-8M31 14l9-11q5-4 10 0 4 5 0 10l-10 9" /></Svg></BigIcon>
          <Lines first="Sensitivity" caret off />
        </BigButton>
      </GroupBody>
      <GroupLabel>Tags</GroupLabel>
    </Group>
    <Divider />
    <Group $w={192}>
      <GroupBody $center>
        <BigButton $w={180}>
          <BigIcon><Svg w={44} h={52} strokeWidth="3"><path d="M2 12V4h40v8M22 4v44M14 48h16" /></Svg></BigIcon>
          <Lines first="Switch to plain" second="text" />
        </BigButton>
      </GroupBody>
      <GroupLabel>Format</GroupLabel>
    </Group>
  </Ribbon>
);

const favorites = [["Inbox", "inbox"], ["Sent Items", "sent"], ["Drafts", "drafts"]];
const folders = [
  ["Inbox", "inbox"], ["Drafts", "drafts"], ["Sent Items", "sent"], ["Deleted Items", "trash", 1, true],
  ["Junk Email", "junk"], ["Archive", "archive"], ["Notes", "notes"], ["Conversation History", "folder"],
  ["Outbox", "outbox", 1], ["RSS Feeds", "folder"], ["Search Folders", "searchFolder"],
];

const Folders = () => (
  <FolderPane>
    <SectionHead><Chevron strokeWidth="1.500" />Favorites</SectionHead>
    {favorites.map(([name, icon], i) => (
      <FolderRow key={name} $active={i === 0}><FolderIcon>{icons[icon]}</FolderIcon>{name}</FolderRow>
    ))}
    <AccountHead><Chevron strokeWidth="1.500" /><Redaction /></AccountHead>
    {folders.map(([name, icon, count, strong]) => (
      <FolderRow key={name}>
        <FolderIcon>{icons[icon]}</FolderIcon>{name}
        {count && <Count $strong={strong}>{count}</Count>}
      </FolderRow>
    ))}
    <FolderRow $nested>
      <NestedCaret><Svg w={10} h={14} strokeWidth="1.500"><path d="M2 1l6 6-6 6" /></Svg></NestedCaret>
      <FolderIcon>{icons.shared}</FolderIcon>Shared with me
    </FolderRow>
    <GroupsLink href="#groups">Go to new Groups</GroupsLink>
    <AddAccount>
      <Svg w={36} h={36}><circle cx="15" cy="9" r="8" /><path d="M16 32Q2 32 2 25q0-3 3-3h12" /><circle cx="26" cy="26" r="9" fill="#1267b4" stroke="none" /><path d="M26 21v10M21 26h10" stroke="#fff" /></Svg>
      Add account
    </AddAccount>
  </FolderPane>
);

const hiddenRows = [
  { h: 122, bg: "#ebf3fa", top: 7 }, { h: 2, bg: "#e0e0e0" }, { h: 70, bg: "#fafafa" }, { h: 164, bg: "#cfe3f8" },
  { h: 73, bg: "#fafafa" }, { h: 2, bg: "#e0e0e0" }, { h: 228 }, { h: 2, bg: "#e0e0e0" }, { h: 229 }, { h: 2, bg: "#e0e0e0" },
];

const messages = [
  { id: "pe", who: "p", initials: "PE", subject: "Welcome to GoDadd...", time: "Wed 14:29", text: "Welcome to GoDaddy's Advance...", covered: true },
  { id: "office", who: "Sultan Almuzaini", initials: "SA", subject: "Office location", time: "Wed 13:55", text: "2915 Musa Ibn Nusair St Building..." },
  { id: "draft", who: "Sultan Almuzaini", initials: "SA", subject: "Draft to clients // Ista...", time: "Wed 12:42", text: "Dear xxxx,, I hope this email finds...", replied: true },
];

const MessageList = () => (
  <ListPane>
    <ListHead>
      <PivotTab $active>Focused</PivotTab>
      <PivotTab>Other</PivotTab>
      <ListActions>
        <button aria-label="Select"><Svg w={30} h={30}><rect x="2" y="2" width="23" height="23" rx="5" /><path d="M8 28h12a8 8 0 008-8V8" /></Svg></button>
        <button aria-label="Filter"><Svg w={28} h={22}><path d="M1 2h26M5 11h18M9 20h10" /></Svg></button>
      </ListActions>
    </ListHead>
    <ListBody>
      <Rows>
        {hiddenRows.map((r, i) => <HiddenRow key={i} $h={r.h} $bg={r.bg} $top={r.top} />)}
        {messages.map((m) => (
          <MessageRow key={m.id} $covered={m.covered}>
            <Avatar $blue={m.covered}>{m.initials}</Avatar>
            <MessageText>
              <MessageLine $indent={m.covered ? 66 : 0}>{m.who}
                {m.replied && <ReplyMark><Svg w={34} h={28}><path d="M11 2L2 11l9 9M2 11h15q15 1 15 15" /></Svg></ReplyMark>}
              </MessageLine>
              <MessageLine>{m.subject}<Time>{m.time}</Time></MessageLine>
              <MessageLine $dim>{m.text}</MessageLine>
            </MessageText>
            {m.covered && <RowCover />}
          </MessageRow>
        ))}
      </Rows>
      <ScrollTrack>
        <Svg w={10} h={6} stroke="none"><path d="M5 0l5 6H0z" fill="currentColor" /></Svg>
        <ScrollThumb />
        <Svg w={10} h={6} stroke="none"><path d="M5 6l5-6H0z" fill="currentColor" /></Svg>
      </ScrollTrack>
    </ListBody>
  </ListPane>
);

const Compose = () => (
  <ComposeColumn>
    <ComposeCard>
      <ComposeBar>
        <SendGroup>
          <SendButton $w={159}>Send</SendButton>
          <SendButton $w={61} aria-label="More send options"><Chevron w={26} h={19} strokeWidth="1.200" /></SendButton>
        </SendGroup>
        <BarActions>
          <BarButton aria-label="Encrypt"><Svg w={26} h={28}><path d="M13 2q5 4 11 4v8q0 9-11 12Q2 23 2 14V6q6 0 11-4z" /><path d="M10 11q0-3 3-3t3 3q0 2-3 4M13 19v1" /></Svg></BarButton>
          <BarButton $gap={28} aria-label="Encryption options"><Chevron strokeWidth="1.500" /></BarButton>
          <BarButton $gap={69} aria-label="Discard"><Svg w={26} h={30} box="0 0 34 34"><path d="M2 6h31M5 6l4 23a4 4 0 004 3h8a4 4 0 004-3l4-23M12 6c0-6 10-6 10 0M14 13v12M20 13v12" /></Svg></BarButton>
          <BarButton $gap={75} aria-label="Pop out"><Svg w={26} h={26}><rect x="6" y="2" width="18" height="18" rx="4" /><path d="M2 7v11a6 6 0 006 6h11" /></Svg></BarButton>
        </BarActions>
      </ComposeBar>
      <Recipient>
        <RecipientButton>To</RecipientButton>
        <RecipientField><TextCursor /><PlainInput aria-label="To" /></RecipientField>
      </Recipient>
      <Recipient>
        <RecipientButton>Cc</RecipientButton>
        <RecipientField><PlainInput aria-label="Cc" /></RecipientField>
      </Recipient>
      <SubjectRow><PlainInput aria-label="Subject" placeholder="Add a subject" /></SubjectRow>
      <Body aria-label="Message body" placeholder="Type / to insert files and more" />
    </ComposeCard>
    <DraftTabs>
      <DraftTab><DraftTitle>Undeliverable: looking to r...</DraftTitle></DraftTab>
      <DraftTab $active>
        <DraftTitle><Svg w={30} h={30}><path d="M2 28l2-9L21 3q4-3 6 0t0 6L11 26zM18 6l6 6M4 19l7 7" /></Svg>(No subject)</DraftTitle>
        <DraftClose aria-label="Close draft"><Svg w={22} h={22}><path d="M1 1l20 20M21 1L1 21" /></Svg></DraftClose>
      </DraftTab>
    </DraftTabs>
  </ComposeColumn>
);

const App = () => (
  <Page>
    <GlobalStyle />
    <Screen>
      <TitleBar>
        <Brand>Outlook</Brand>
        <TitleSearch>
          <Svg w={26} h={28}><circle cx="10" cy="11" r="9" /><path d="M17 18l8 8" /></Svg>
          <PlainInput aria-label="Search mail" placeholder="Search" $hint="#424242" />
        </TitleSearch>
        <TitleActions>
          <TitleButton aria-label="Notes"><Svg w={32} h={32}><path d="M8 28q-6 0-6-6V8q0-6 6-6h14M10 22l4 8 16-16-5-7-15 15zM16 18l6 6" /></Svg></TitleButton>
          <TitleButton aria-label="Notifications"><Svg w={32} h={32}><path d="M5 26l-3-2 3-7v-5a11 11 0 0122 0v5l3 7-3 2zM12 26q4 8 8 0" /></Svg></TitleButton>
          <TitleButton aria-label="Settings"><Svg w={34} h={34}><path d="M14 2h6l1 5 4 2 5-2 3 6-4 4 4 4-3 6-5-2-4 2-1 5h-6l-1-5-4-2-5 2-3-6 4-4-4-4 3-6 5 2 4-2z" /><circle cx="17" cy="17" r="4" /></Svg></TitleButton>
          <TitleButton aria-label="Tips"><Svg w={24} h={34}><path d="M7 22q-5-5-5-11a10 9 0 0120 0q0 6-5 11l-1 8q-4 4-8 0zM7 24h10" /></Svg></TitleButton>
          <TitleButton aria-label="Minimize"><Svg w={24} h={20}><path d="M1 18h22" /></Svg></TitleButton>
          <TitleButton aria-label="Restore"><Svg w={30} h={38}><rect x="2" y="12" width="20" height="24" rx="5" /><path d="M8 8q0-4 6-4h6q7 0 7 8v12q0 4-2 6" /></Svg></TitleButton>
        </TitleActions>
      </TitleBar>
      <Shell>
        <Rail>
          <RailButton $active aria-label="Mail"><MailLogo /></RailButton>
          <RailButton aria-label="Calendar"><CalendarLogo /></RailButton>
          <RailButton aria-label="People"><PeopleLogo /></RailButton>
          <RailButton aria-label="Groups"><GroupsLogo /></RailButton>
          <RailButton aria-label="To do"><TodoLogo /></RailButton>
          <RailButton aria-label="OneDrive"><CloudLogo /></RailButton>
          <RailButton $compact aria-label="More apps"><Svg w={38} h={38} box="0 0 52 52" strokeWidth="4"><rect x="2" y="2" width="48" height="48" rx="7" /><rect x="11" y="11" width="11" height="11" rx="2" /><rect x="30" y="11" width="11" height="11" rx="2" /><rect x="11" y="30" width="11" height="11" rx="2" /><rect x="30" y="30" width="11" height="11" rx="2" /></Svg></RailButton>
        </Rail>
        <Main>
          <MenuRow>
            <MenuToggle aria-label="Toggle navigation"><Svg w={34} h={24}><path d="M1 2h32M1 12h32M1 22h32" /></Svg></MenuToggle>
            {ribbonTabs.map((t) => <MenuTab key={t} $active={t === "Message"}>{t}</MenuTab>)}
          </MenuRow>
          <RibbonBar />
          <Workspace>
            <Folders />
            <MessageList />
            <Compose />
            <TipCard>
              <Svg w={20} h={28}><path d="M6 19Q2 14 2 9a8 8 0 0116 0q0 5-4 10v5q-4 4-8 0zM6 20h8" /><path d="M6 20h8v4q-4 4-8 0z" fill="currentColor" stroke="none" /></Svg>
              <span>Welcome to the new Outlook</span><span>(1/5)</span>
            </TipCard>
          </Workspace>
        </Main>
      </Shell>
      <Taskbar>
        <Weather><SunLogo /><span>41°C<small>Sunny</small></span></Weather>
        <TaskApp aria-label="Start"><WindowsLogo /></TaskApp>
        <TaskSearch>
          <Svg w={30} h={32} strokeWidth="3.500"><circle cx="13" cy="13" r="11" /><path d="M20 22l8 8" /></Svg>
          <PlainInput aria-label="Search Windows" placeholder="Search" $hint="#5a5c5e" />
        </TaskSearch>
        <TaskApp aria-label="Task view"><TaskViewLogo /></TaskApp>
        <TaskApp aria-label="File Explorer"><FilesLogo /></TaskApp>
        <TaskApp aria-label="Edge"><EdgeLogo /></TaskApp>
        <TaskApp $active aria-label="Outlook"><OutlookLogo /></TaskApp>
        <TaskApp $open aria-label="Chrome"><ChromeLogo /></TaskApp>
        <TaskApp $open aria-label="Teams"><TeamsLogo /></TaskApp>
        <TaskApp aria-label="Word"><WordLogo /></TaskApp>
        <TaskApp $open aria-label="Acrobat"><AcrobatLogo /></TaskApp>
        <TaskApp $open aria-label="WhatsApp"><WhatsAppLogo /></TaskApp>
        <Tray>
          <Svg w={22} h={16} strokeWidth="2.500"><path d="M2 14L11 3l9 11" /></Svg>
          <Svg w={34} h={28} stroke="none"><path d="M8 24a8 8 0 01-1-15Q10 1 17 1q8 0 10 8l3 8z" fill="#8b8d90" stroke="#111" strokeWidth="3" /><circle cx="25" cy="19" r="9" fill="#f2f4f7" /><path d="M20 18q2-5 8-3M30 20q-2 5-8 3M29 11v4h-4M21 27v-4h4" stroke="#1267b4" strokeWidth="2" /></Svg>
          <TrayText>ENG<br />US</TrayText>
          <TrayIcons>
            <Svg w={34} h={24} strokeWidth="2.500"><path d="M2 9Q17-6 32 9M7 14q10-10 20 0M12 18q5-5 10 0" /><circle cx="17" cy="21" r="2" fill="currentColor" stroke="none" /></Svg>
            <Svg w={34} h={26}><path d="M2 9h5l7-7v22l-7-7H2zM19 8q3 5 0 10M23 5q6 8 0 16" /><path d="M27 2q8 11 0 22" stroke="#b4b7ba" /></Svg>
            <Svg w={34} h={28}><rect x="3" y="7" width="26" height="19" rx="4" strokeWidth="2.500" /><path d="M7 11h18v11H7z" fill="currentColor" stroke="none" /><path d="M31 13v7h2v-7z" fill="currentColor" stroke="currentColor" strokeWidth="1" /><path d="M7 0L1 10h5l-2 8 8-11H7z" fill="currentColor" stroke="#d9dcdf" strokeWidth="1" /></Svg>
          </TrayIcons>
          <ClockGroup>
            <TrayText $align="right">12:50 PM<br />2024-07-25</TrayText>
            <Svg w={26} h={30} stroke="none"><path d="M0 24l3-5v-8a10 10 0 0120 0v8l3 5zM8 26h10q-2 4-5 4t-5-4z" fill="#003e92" /></Svg>
          </ClockGroup>
        </Tray>
      </Taskbar>
    </Screen>
  </Page>
);

export default App;
